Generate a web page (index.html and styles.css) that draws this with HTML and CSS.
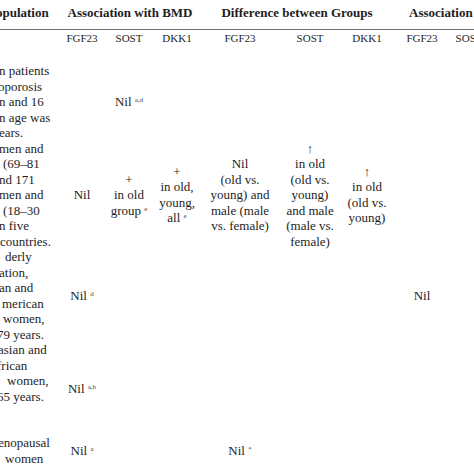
FILE: index.html
```html
<!DOCTYPE html>
<html lang="en">
<head>
<meta charset="utf-8">
<title>Table</title>
<link rel="stylesheet" href="styles.css">
</head>
<body>
<table class="tbl">
  <colgroup>
    <col class="c-pop">
    <col class="c-a1">
    <col class="c-a2">
    <col class="c-a3">
    <col class="c-d1">
    <col class="c-d2">
    <col class="c-d3">
    <col class="c-b1">
    <col class="c-b2">
    <col class="c-b3">
  </colgroup>
  <thead>
    <tr class="head">
      <th class="pop-th"><span class="pop-title">Population</span></th>
      <th colspan="3">Association with BMD</th>
      <th colspan="3">Difference between Groups</th>
      <th colspan="3">Association with BMD</th>
    </tr>
    <tr class="sub">
      <td></td>
      <td>FGF23</td>
      <td>SOST</td>
      <td>DKK1</td>
      <td>FGF23</td>
      <td>SOST</td>
      <td>DKK1</td>
      <td>FGF23</td>
      <td>SOST</td>
      <td>DKK1</td>
    </tr>
  </thead>
  <tbody class="body">
    <tr>
      <td class="pop">
        <span class="sh1">n patients</span>
        <span class="sh2">oporosis</span>
        <span class="sh1">n and 16</span>
        <span class="sh1">n age was</span>
        <span class="sh1">ears.</span>
      </td>
      <td></td>
      <td>Nil <sup>a,d</sup></td>
      <td></td><td></td><td></td><td></td><td></td><td></td><td></td>
    </tr>
    <tr>
      <td class="pop">
        <span class="sh1">men and</span>
        <span class="in3">(69–81</span>
        <span class="sh1">nd 171</span>
        <span class="sh1">men and</span>
        <span class="in3">(18–30</span>
        <span class="sh1">n five</span>
        <span>countries.</span>
      </td>
      <td>Nil</td>
      <td>+<br>in old<br>group <sup>e</sup></td>
      <td>+<br>in old,<br>young,<br>all <sup>e</sup></td>
      <td>Nil<br>(old vs.<br>young) and<br>male (male<br>vs. female)</td>
      <td>↑<br>in old<br>(old vs.<br>young)<br>and male<br>(male vs.<br>female)</td>
      <td>↑<br>in old<br>(old vs.<br>young)</td>
      <td></td><td></td><td></td>
    </tr>
    <tr>
      <td class="pop">
        <span class="in5">derly</span>
        <span class="sh1">ation,</span>
        <span class="sh1">an and</span>
        <span class="in2">merican</span>
        <span class="in3">women,</span>
        <span class="sh3">79 years.</span>
      </td>
      <td>Nil <sup>d</sup></td>
      <td></td><td></td><td></td><td></td><td></td>
      <td>Nil</td>
      <td></td><td></td>
    </tr>
    <tr>
      <td class="pop pad-end">
        <span class="sh2">asian and</span>
        <span class="sh3">frican</span>
        <span class="in7">women,</span>
        <span class="sh3">65 years.</span>
      </td>
      <td>Nil <sup>a,b</sup></td>
      <td></td><td></td><td></td><td></td><td></td><td></td><td></td><td></td>
    </tr>
    <tr>
      <td class="pop">
        <span class="sh2">enopausal</span>
        <span class="in5">women</span>
      </td>
      <td>Nil <sup>a</sup></td>
      <td></td><td></td>
      <td>Nil <sup>*</sup></td>
      <td></td><td></td><td></td><td></td><td></td>
    </tr>
  </tbody>
</table>
</body>
</html>
```

FILE: styles.css
```css
html, body {
  margin: 0;
  padding: 0;
  background: #ffffff;
  overflow: hidden;
}

body {
  width: 474px;
  height: 474px;
  font-family: "Liberation Serif", "Times New Roman", serif;
  color: #1e1e1e;
}

.tbl {
  border-collapse: collapse;
  table-layout: fixed;
  width: 551px;
}

.c-pop { width: 58px; }
.c-a1 { width: 48px; }
.c-a2 { width: 46px; }
.c-a3 { width: 50px; }
.c-d1 { width: 76px; }
.c-d2 { width: 64px; }
.c-d3 { width: 50px; }
.c-b1 { width: 60px; }
.c-b2 { width: 34px; }
.c-b3 { width: 65px; }

th, td {
  padding: 0;
  text-align: center;
  vertical-align: middle;
  white-space: nowrap;
}

.head th {
  font-size: 13px;
  font-weight: bold;
  line-height: 16px;
  padding: 5px 0 8px;
  border-bottom: 1px solid #6e6e6e;
}

.head .pop-th {
  text-align: left;
}

.pop-title {
  display: inline-block;
  margin-left: -12px;
}

.sub td {
  font-size: 11px;
  line-height: 13px;
  padding: 2px 0 18px;
}

.body td {
  font-size: 13px;
  line-height: 15.5px;
}

.body .pop {
  text-align: left;
}

.pop span {
  display: block;
}

.pad-end {
  padding-bottom: 31px;
}

.sh1 { margin-left: -1px; }
.sh2 { margin-left: -2px; }
.sh3 { margin-left: -3px; }
.in2 { padding-left: 2px; }
.in3 { padding-left: 3px; }
.in5 { padding-left: 5px; }
.in7 { padding-left: 7px; }

sup {
  font-size: 7px;
  line-height: 0;
  vertical-align: 4px;
  color: #444;
}
```
